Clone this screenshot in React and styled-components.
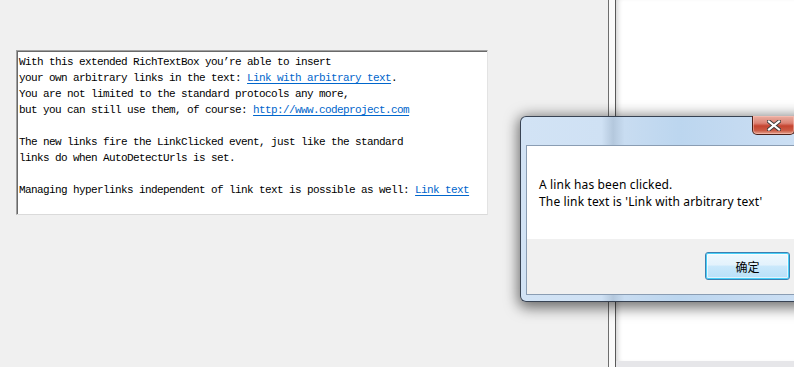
import React from 'react';
import styled, { createGlobalStyle } from 'styled-components';

const Global = createGlobalStyle`
  html, body { margin: 0; padding: 0; width: 100%; height: 100%; overflow: hidden; background: #f0f0f0; }
  #root { width: 100%; height: 100%; }
`;

const Screen = styled.div`
  position: relative;
  display: flex;
  width: 794px;
  height: 367px;
  overflow: hidden;
  background: #f0f0f0;
`;

const FormPanel = styled.div`
  flex: none;
  width: 608px;
  box-sizing: border-box;
  padding: 50px 0 0 16px;
`;

const RichBox = styled.div`
  width: 472px;
  height: 165px;
  box-sizing: border-box;
  background: #fff;
  border-style: solid;
  border-width: 1px;
  border-color: #a0a0a0 #e3e3e3 #dadada #a0a0a0;
  box-shadow: inset 1px 1px 0 #696969;
  padding: 3px 0 0 2px;
  font-family: "Liberation Mono", "DejaVu Sans Mono", monospace;
  font-size: 11px;
  letter-spacing: -0.6px;
  line-height: 16px;
  color: #000;
  white-space: pre;
`;

const Line = styled.div`
  height: 16px;
`;

const Link = styled.span`
  color: #0066cc;
  text-decoration: underline;
  text-underline-offset: 2px;
`;

const Splitter = styled.div`
  flex: none;
  width: 8px;
  box-sizing: border-box;
  background: #fafafa;
  border-left: 1px solid #6e6e6e;
  border-right: 1px solid #585858;
`;

const OtherWindow = styled.div`
  flex: 1;
  display: flex;
  flex-direction: column;
`;

const OtherClient = styled.div`
  flex: 1;
  background: #fff;
  box-shadow: inset 5px 0 5px -3px rgba(0, 0, 0, 0.18);
`;

const OtherStatus = styled.div`
  height: 6px;
  background: #e6e6e9;
`;

const Dialog = styled.div`
  position: absolute;
  left: 520px;
  top: 116px;
  width: 290px;
  height: 186px;
  box-sizing: border-box;
  display: flex;
  flex-direction: column;
  border: 1px solid rgba(30, 40, 55, 0.85);
  border-radius: 6px;
  background: linear-gradient(
    90deg,
    #d2e3f5 0%,
    #cfe1f4 28%,
    #b4c8dd 32%,
    #c8dcf1 36%,
    #bcd6ef 55%,
    #c4daf1 75%,
    #cde0f4 100%
  );
  box-shadow: 1px 3px 14px 3px rgba(0, 0, 0, 0.55);
  padding: 0 5px 6px 5px;
`;

const TitleBar = styled.div`
  position: relative;
  height: 28px;
  flex: none;
`;

const CloseButton = styled.div`
  position: absolute;
  left: 226px;
  top: -1px;
  width: 43px;
  height: 19px;
  box-sizing: border-box;
  border: 1px solid #4b2018;
  border-top: none;
  border-radius: 0 0 5px 5px;
  background: linear-gradient(180deg, #eab0a3 0%, #dc8274 40%, #c54430 55%, #cb5a44 80%, #e3a591 100%);
  box-shadow: inset 0 0 0 1px rgba(255, 200, 190, 0.5);
  display: flex;
  align-items: center;
  justify-content: center;
`;

const Client = styled.div`
  flex: 1;
  display: flex;
  flex-direction: column;
  border: 1px solid #8a9db3;
  background: #fff;
`;

const Message = styled.div`
  flex: 1;
  padding: 30px 0 0 12px;
  font-family: "Noto Sans", "Open Sans", sans-serif;
  font-size: 12px;
  letter-spacing: 0.15px;
  line-height: 17px;
  color: #000;
  white-space: nowrap;
`;

const Footer = styled.div`
  height: 55px;
  flex: none;
  box-sizing: border-box;
  background: #f0f0f0;
  display: flex;
  justify-content: flex-end;
  align-items: flex-start;
  padding: 13px 13px 0 0;
`;

const OkButton = styled.div`
  width: 85px;
  height: 28px;
  box-sizing: border-box;
  border: 1px solid #3c7fb1;
  border-radius: 3px;
  box-shadow: inset 0 0 0 1px #48d0f8, inset 0 0 0 2px rgba(255,255,255,0.6);
  background: linear-gradient(180deg, #eef8fe 0%, #e3f2fc 45%, #c9e8fb 52%, #b8e0f8 100%);
  display: flex;
  align-items: center;
  justify-content: center;
  font-family: "Noto Sans CJK SC", "Noto Sans", sans-serif;
  font-size: 12px;
  color: #000;
`;

const lines = [
  ['With this extended RichTextBox you\u2019re able to insert'],
  ['your own arbitrary links in the text: ', { link: 'Link with arbitrary text' }, '.'],
  ['You are not limited to the standard protocols any more,'],
  ['but you can still use them, of course: ', { link: 'http://www.codeproject.com' }],
  [''],
  ['The new links fire the LinkClicked event, just like the standard'],
  ['links do when AutoDetectUrls is set.'],
  [''],
  ['Managing hyperlinks independent of link text is possible as well: ', { link: 'Link text' }],
];

function CloseGlyph() {
  return (
    <svg width="14" height="11" viewBox="0 0 14 11">
      <path
        d="M2 1.5 L12 9.5 M12 1.5 L2 9.5"
        stroke="#3b3b3b"
        strokeWidth="4"
        strokeLinecap="square"
        fill="none"
      />
      <path
        d="M2 1.5 L12 9.5 M12 1.5 L2 9.5"
        stroke="#ffffff"
        strokeWidth="2.2"
        strokeLinecap="square"
        fill="none"
      />
    </svg>
  );
}

export default function App() {
  return (
    <>
      <Global />
      <Screen>
        <FormPanel>
          <RichBox>
            {lines.map((parts, i) => (
              <Line key={i}>
                {parts.map((p, j) =>
                  typeof p === 'string' ? <span key={j}>{p}</span> : <Link key={j}>{p.link}</Link>
                )}
              </Line>
            ))}
          </RichBox>
        </FormPanel>
        <Splitter />
        <OtherWindow>
          <OtherClient />
          <OtherStatus />
        </OtherWindow>
        <Dialog>
          <TitleBar>
            <CloseButton>
              <CloseGlyph />
            </CloseButton>
          </TitleBar>
          <Client>
            <Message>
              <div>A link has been clicked.</div>
              <div>The link text is 'Link with arbitrary text'</div>
            </Message>
            <Footer>
              <OkButton>确定</OkButton>
            </Footer>
          </Client>
        </Dialog>
      </Screen>
    </>
  );
}
